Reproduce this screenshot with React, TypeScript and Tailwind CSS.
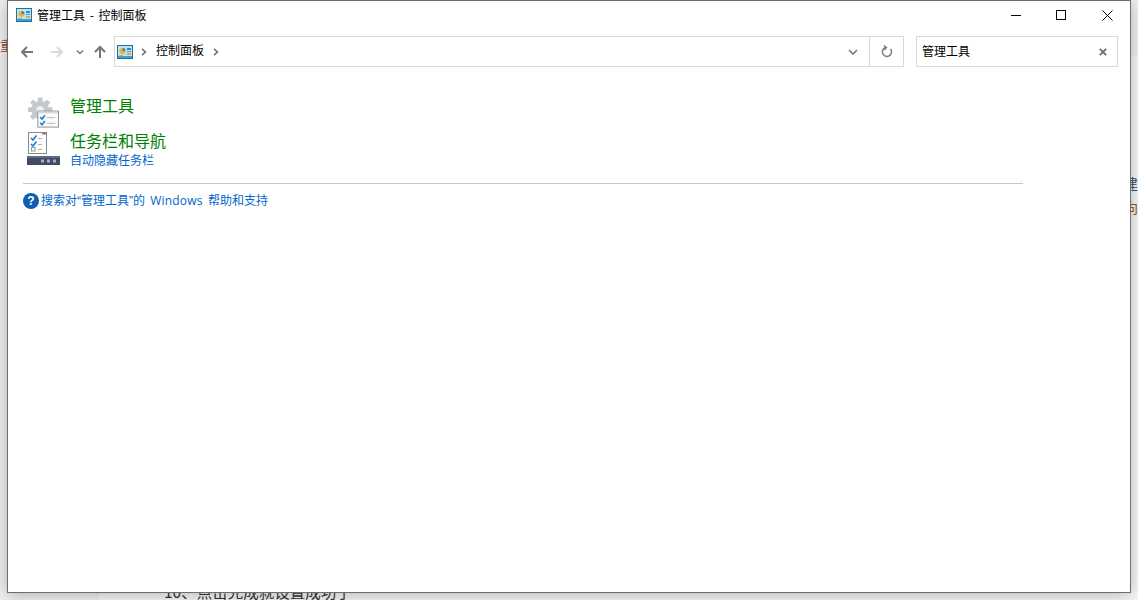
const font = { fontFamily: '"Microsoft YaHei","Noto Sans CJK SC","Noto Sans",sans-serif' };

function CpIcon({ className }: { className?: string }) {
  return (
    <svg className={className} viewBox="0 0 16 14" width="16" height="14">
      <rect x="0.5" y="0.5" width="15" height="13" fill="#bfe3f5" stroke="#1f6f9f" />
      <rect x="1" y="11" width="14" height="2" fill="#3f9fd0" />
      <circle cx="5.5" cy="6" r="3" fill="#f0b429" />
      <path d="M5.5 6V3a3 3 0 0 1 3 3z" fill="#2f86c0" />
      <rect x="10" y="3" width="4" height="2" fill="#2f86c0" />
      <rect x="10" y="6" width="4" height="1" fill="#5a9cc5" />
      <rect x="10" y="8" width="4" height="2" fill="#e8a33a" />
      <rect x="2" y="10" width="4" height="1" fill="#e8a33a" />
    </svg>
  );
}

function GearIcon() {
  return (
    <svg width="32" height="33" viewBox="0 0 34 34">
      <g fill="#c3c9ce">
        <circle cx="14" cy="14" r="9.5" />
        <rect x="11.5" y="1" width="5" height="26" rx="1" />
        <rect x="1" y="11.5" width="26" height="5" rx="1" />
        <rect x="11.5" y="1" width="5" height="26" rx="1" transform="rotate(45 14 14)" />
        <rect x="11.5" y="1" width="5" height="26" rx="1" transform="rotate(-45 14 14)" />
      </g>
      <circle cx="14" cy="14" r="4" fill="#eef0f2" />
      <rect x="11.5" y="15.5" width="22" height="17" fill="#fbfbfb" stroke="#8c8c8c" />
      <rect x="12" y="16" width="21" height="2" fill="#d5d8dc" />
      <path d="M14 22l2 2 3-4" fill="none" stroke="#2a7fd6" strokeWidth="1.8" />
      <path d="M14 28l2 2 3-4" fill="none" stroke="#2a7fd6" strokeWidth="1.8" />
      <path d="M21 22.5h9M21 28.5h9" stroke="#b5b5b5" />
    </svg>
  );
}

function TaskbarIcon() {
  return (
    <svg width="34" height="34" viewBox="0 0 34 34">
      <rect x="1.5" y="0.5" width="18" height="21" fill="#fff" stroke="#8a8a8a" />
      <rect x="15" y="1" width="4" height="1.5" fill="#b86a6a" />
      <path d="M4 6l2 2 3.5-4.5" fill="none" stroke="#1f7fd6" strokeWidth="1.7" />
      <path d="M4 12l2 2 3.5-4.5" fill="none" stroke="#1f7fd6" strokeWidth="1.7" />
      <rect x="4.5" y="15.5" width="3.5" height="3.5" fill="#fff" stroke="#999" />
      <path d="M11 6.5h4M11 12.5h4M11 17.5h4" stroke="#b0b0b0" />
      <rect x="0" y="24" width="33" height="9" fill="#3f4b63" />
      <rect x="0" y="24" width="33" height="2" fill="#5d6a84" />
      <rect x="14" y="27.5" width="3" height="3" fill="#a8b0bf" />
      <rect x="20" y="27.5" width="3" height="3" fill="#a8b0bf" />
      <rect x="26" y="27.5" width="3" height="3" fill="#a8b0bf" />
    </svg>
  );
}

function Arrow({ dir, color }: { dir: "l" | "r" | "u"; color: string }) {
  const d = dir === "l" ? "M13 7H2M7 2L2 7l5 5" : dir === "r" ? "M1 7h11M7 2l5 5-5 5" : "M7 13V2M2 7l5-5 5 5";
  return (
    <svg width="14" height="14" viewBox="0 0 14 14" fill="none" stroke={color} strokeWidth="2">
      <path d={d} />
    </svg>
  );
}

function Chevron() {
  return (
    <svg width="6" height="8" viewBox="0 0 6 8" fill="none" stroke="#707070" strokeWidth="1.6">
      <path d="M1 0.8L4.4 4 1 7.2" />
    </svg>
  );
}

function Down({ w = 10 }: { w?: number }) {
  return (
    <svg width={w} height="6" viewBox="0 0 10 6" fill="none" stroke="#7a7a7a" strokeWidth="1.7">
      <path d="M1 1l4 4 4-4" />
    </svg>
  );
}

export default function App() {
  return (
    <div style={font} className="relative h-[600px] w-[1138px] overflow-hidden bg-[#f1f1f1] text-black">
      {/* page behind the window */}
      <div className="absolute bottom-0 left-[99px] right-0 top-[56px] bg-[#f8f8f8]" />
      <div className="absolute left-[164px] top-[580px] whitespace-nowrap text-[15.5px] leading-[22px] text-[#333]">10、点击完成就设置成功了</div>
      <div className="absolute left-0 top-[33px] text-[14px] leading-[24px] text-[#8a4a3a]">重</div>
      <div className="absolute left-[1124px] top-[173px] text-[14px] leading-[20px] text-[#3a4a6a]">建</div>
      <div className="absolute left-[1124px] top-[197px] text-[14px] leading-[20px] text-[#8a5a3a]">向</div>

      {/* window */}
      <div className="absolute left-[7px] top-0 flex h-[593px] w-[1124px] flex-col border border-[#6d6d6d] bg-white shadow-[0_2px_16px_rgba(0,0,0,0.28)]">
        {/* title bar */}
        <div className="flex h-[28px] items-center pl-2">
          <CpIcon />
          <span className="ml-[5px] text-[12px] leading-[16px] [word-spacing:2px]">管理工具 - 控制面板</span>
          <div className="ml-auto flex h-full">
            <div className="flex h-full w-[46px] items-center justify-center pl-[1px]">
              <div className="h-px w-[10px] bg-black" />
            </div>
            <div className="flex h-full w-[46px] items-center justify-center">
              <div className="h-[10px] w-[10px] border border-black" />
            </div>
            <div className="flex h-full w-[46px] items-center justify-center">
              <svg width="11" height="11" viewBox="0 0 11 11" stroke="#000" strokeWidth="1">
                <path d="M0.5 0.5l10 10M10.5 0.5l-10 10" />
              </svg>
            </div>
          </div>
        </div>
        {/* nav bar */}
        <div className="mt-[7px] flex h-[31px] items-center">
          <div className="ml-[12px] flex items-center"><Arrow dir="l" color="#757575" /></div>
          <div className="ml-[16px] flex items-center"><Arrow dir="r" color="#d9d9d9" /></div>
          <div className="ml-[12px] flex items-center"><Down w={8} /></div>
          <div className="ml-[9px] flex items-center"><Arrow dir="u" color="#757575" /></div>
          <div className="ml-[7px] flex h-[31px] w-[790px] items-center border border-[#d9d9d9]">
            <div className="ml-[2px] flex items-center"><CpIcon /></div>
            <div className="ml-[8px] flex items-center"><Chevron /></div>
            <span className="ml-[9px] pb-[3px] text-[12px]">控制面板</span>
            <div className="ml-[9px] flex items-center"><Chevron /></div>
            <div className="ml-auto flex h-full items-center">
              <div className="mr-[11px] flex items-center"><Down w={10} /></div>
              <div className="flex h-full w-[34px] items-center justify-center border-l border-[#d9d9d9]">
                <svg width="12" height="13" viewBox="0 0 12 13" fill="none" stroke="#7d7d7d" strokeWidth="1.5">
                  <path d="M4 2.6A4.6 4.6 0 1 0 9.6 4" />
                  <path d="M3 0.6L5.4 2.6 3.4 5" />
                </svg>
              </div>
            </div>
          </div>
          <div className="ml-[12px] flex h-[31px] w-[202px] items-center border border-[#d9d9d9] pl-[5px] pr-[10px]">
            <span className="pb-[2px] text-[12px]">管理工具</span>
            <svg className="ml-auto" width="8" height="8" viewBox="0 0 8 8" stroke="#6d6d6d" strokeWidth="1.8">
              <path d="M0.8 0.8l6.4 6.4M7.2 0.8L0.8 7.2" />
            </svg>
          </div>
        </div>
        {/* content */}
        <div className="flex w-[1000px] flex-col pl-[15px]">
          <div className="mt-[29px] flex h-[36px] items-start pl-[4px]">
            <GearIcon />
            <div className="ml-[11px] mt-[-2px]">
              <div className="text-[16px] leading-[22px] text-[#008000]">管理工具</div>
            </div>
          </div>
          <div className="flex h-[36px] items-start pl-[4px]">
            <TaskbarIcon />
            <div className="ml-[9px] mt-[-3px] flex flex-col">
              <span className="text-[16px] leading-[22px] text-[#008000]">任务栏和导航</span>
              <span className="mt-[2px] text-[12px] leading-[14px] text-[#0066cc]">自动隐藏任务栏</span>
            </div>
          </div>
          <div className="mt-[15px] h-px w-[1000px] bg-[#c8c8c8]" />
          <div className="mt-[8px] flex items-center">
            <svg width="16" height="16" viewBox="0 0 16 16">
              <circle cx="8" cy="8" r="8" fill="#0f5fb0" />
              <text x="8" y="12" textAnchor="middle" fill="#fff" fontSize="12" fontWeight="700" fontFamily="Liberation Sans">?</text>
            </svg>
            <span className="ml-[2px] text-[12px] leading-[16px] text-[#0066cc] [word-spacing:2.5px]">
              搜索对<span className="font-['Liberation_Sans']">“</span>管理工具<span className="font-['Liberation_Sans']">”</span>的 <span className="font-['Open_Sans'] tracking-[0.2px]">Windows</span> 帮助和支持
            </span>
          </div>
        </div>
      </div>
    </div>
  );
}
